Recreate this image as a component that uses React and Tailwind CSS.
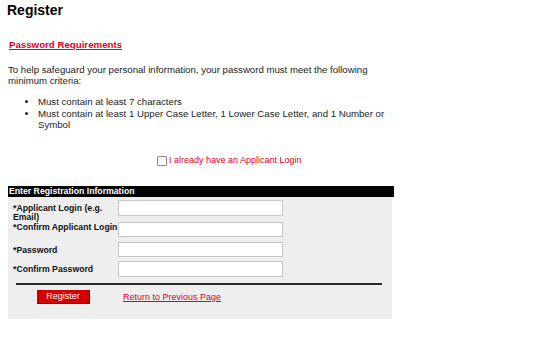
import React, { useState } from "react";

const rows = [
  { label: "*Applicant Login (e.g. Email)", row: "h-[22px]", lab: "pt-[4px]", input: "h-[16px]", type: "text" },
  { label: "*Confirm Applicant Login", row: "h-[20px]", lab: "pt-[1px]", input: "h-[15px]", type: "text" },
  { label: "*Password", row: "h-[19px]", lab: "pt-[4px]", input: "h-[15px]", type: "password" },
  { label: "*Confirm Password", row: "h-[16px]", lab: "pt-[4px]", input: "h-[16px]", type: "password" },
];

const App = () => {
  const [hasLogin, setHasLogin] = useState(false);

  return (
    <div className="w-[550px] h-[349px] bg-white font-['Liberation_Sans',Arial,sans-serif] text-[#222]">
      <h1 className="pl-[7px] pt-[2px] text-[14px] font-bold leading-[17px] text-black">Register</h1>

      <a href="#" className="block mt-[20px] ml-[9px] w-fit text-[9.7px] leading-[12px] font-bold text-[#e0001b] underline">
        Password Requirements
      </a>

      <p className="mt-[13px] ml-[8px] w-[375px] text-[9.65px] leading-[11px]">
        To help safeguard your personal information, your password must meet the following minimum criteria:
      </p>

      <ul className="mt-[10px] pl-[38px] w-[400px] list-disc text-[9.65px] leading-[11px] space-y-[1px]">
        <li>Must contain at least 7 characters</li>
        <li>Must contain at least 1 Upper Case Letter, 1 Lower Case Letter, and 1 Number or Symbol</li>
      </ul>

      <label className="mt-[25px] ml-[157px] flex items-center gap-[2px] w-fit text-[9px] leading-[11px] text-[#d8001c]">
        <input
          type="checkbox"
          checked={hasLogin}
          onChange={(e) => setHasLogin(e.target.checked)}
          className="appearance-none w-[10px] h-[10px] border border-[#8a8a8a] bg-gradient-to-b from-[#f4f4f4] to-white rounded-[1px]"
        />
        I already have an Applicant Login
      </label>

      <div className="mt-[20px] ml-[8px] w-[386px] h-[11px] bg-black text-white text-[8.7px] font-bold leading-[11px] pl-[1px]">
        Enter Registration Information
      </div>

      <form className="ml-[8px] w-[384px] bg-[#eeeeee] pt-[3px] pb-[15px]" onSubmit={(e) => e.preventDefault()}>
        {rows.map((r) => (
          <div key={r.label} className={`flex items-start ${r.row}`}>
            <div className={`w-[110px] pl-[5px] text-[8.7px] font-bold leading-[9px] text-[#111] ${r.lab}`}>
              {r.label}
            </div>
            <input type={r.type} className={`w-[165px] ${r.input} bg-white border border-[#c6c6c6]`} />
          </div>
        ))}

        <div className="mt-[6px] ml-[8px] w-[366px] h-[2px] bg-[#2a2a2a]" />

        <div className="mt-[5px] flex items-end">
          <button
            type="submit"
            className="ml-[29px] w-[53px] h-[14px] bg-[#d40000] border-b border-r border-[#7a0000] text-white text-[9px] leading-[13px]"
          >
            Register
          </button>
          <a href="#" className="ml-[33px] mb-[1px] text-[9px] leading-[11px] text-[#e0001b] underline">
            Return to Previous Page
          </a>
        </div>
      </form>
    </div>
  );
};

export default App;
